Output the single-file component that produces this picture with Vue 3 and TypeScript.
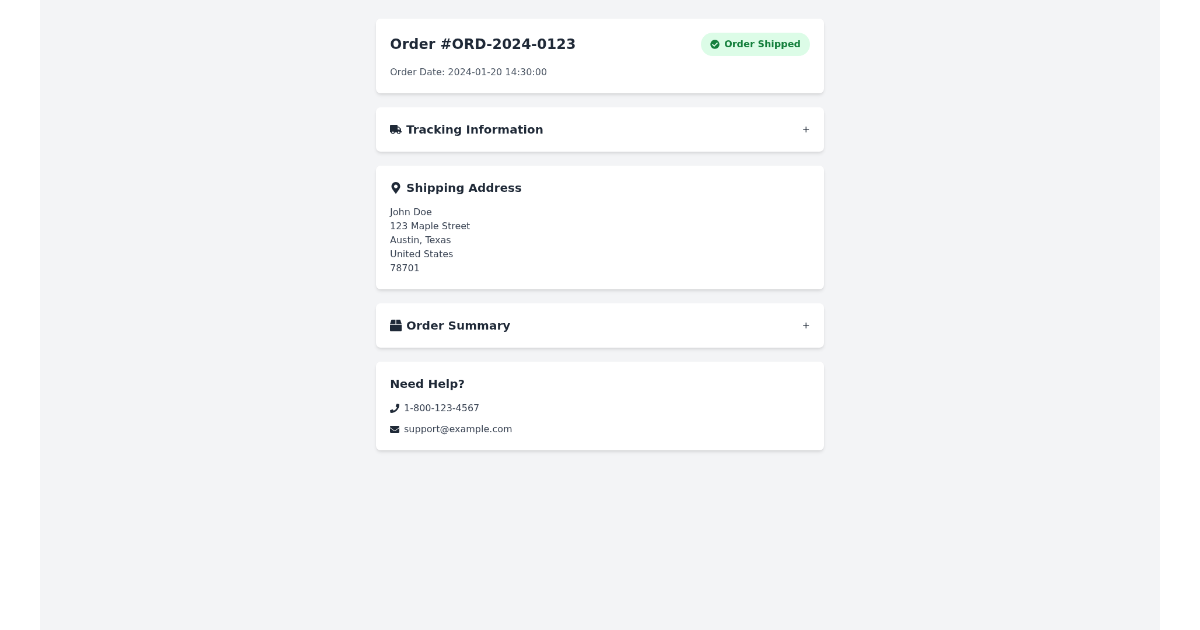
<script setup lang="ts">
const address = ['John Doe', '123 Maple Street', 'Austin, Texas', 'United States', '78701']
</script>

<template>
  <div class="frame">
    <div class="page">
      <div class="column">
        <section class="card">
          <div class="order-head">
            <h1 class="order-title">Order #ORD-2024-0123</h1>
            <span class="badge">
              <svg class="badge-icon" viewBox="0 0 512 512"><path d="M504 256c0 136.967-111.033 248-248 248S8 392.967 8 256 119.033 8 256 8s248 111.033 248 248zM227.314 387.314l184-184c6.248-6.248 6.248-16.379 0-22.627l-22.627-22.627c-6.248-6.249-16.379-6.249-22.628 0L216 308.118l-70.059-70.059c-6.248-6.248-16.379-6.248-22.628 0l-22.627 22.627c-6.248 6.248-6.248 16.379 0 22.627l104 104c6.249 6.249 16.379 6.249 22.628.001z" /></svg>Order Shipped
            </span>
          </div>
          <p class="order-date">Order Date: 2024-01-20 14:30:00</p>
        </section>

        <section class="card row">
          <h2 class="section-title">
            <svg class="title-icon" viewBox="0 0 640 512"><path d="M624 352h-16V243.9c0-12.7-5.1-24.9-14.1-33.9L494 110.1c-9-9-21.2-14.1-33.9-14.1H416V48c0-26.5-21.5-48-48-48H48C21.5 0 0 21.5 0 48v320c0 26.5 21.5 48 48 48h16c0 53 43 96 96 96s96-43 96-96h128c0 53 43 96 96 96s96-43 96-96h48c8.8 0 16-7.2 16-16v-32c0-8.8-7.2-16-16-16zM160 464c-26.5 0-48-21.5-48-48s21.5-48 48-48 48 21.5 48 48-21.5 48-48 48zm320 0c-26.5 0-48-21.5-48-48s21.5-48 48-48 48 21.5 48 48-21.5 48-48 48zm80-208H416V144h44.1l99.9 99.9V256z" /></svg>Tracking Information
          </h2>
          <span class="toggle">+</span>
        </section>

        <section class="card">
          <h2 class="section-title spaced">
            <svg class="title-icon" viewBox="0 0 384 512"><path d="M172.268 501.67C26.97 291.031 0 269.413 0 192 0 85.961 85.961 0 192 0s192 85.961 192 192c0 77.413-26.97 99.031-172.268 309.67-9.535 13.774-29.93 13.773-39.464 0zM192 272c44.183 0 80-35.817 80-80s-35.817-80-80-80-80 35.817-80 80 35.817 80 80 80z" /></svg>Shipping Address
          </h2>
          <div v-for="line in address" :key="line" class="small-line">{{ line }}</div>
        </section>

        <section class="card row">
          <h2 class="section-title">
            <svg class="title-icon" viewBox="0 0 512 512"><path d="M509.5 184.6L458.9 32.8C452.4 13.2 434.1 0 413.4 0H272v192h238.7c-.4-2.5-.4-5-1.2-7.4zM240 0H98.6c-20.7 0-39 13.2-45.5 32.8L2.5 184.6c-.8 2.4-.8 4.9-1.2 7.4H240V0zM0 224v240c0 26.5 21.5 48 48 48h416c26.5 0 48-21.5 48-48V224H0z" /></svg>Order Summary
          </h2>
          <span class="toggle">+</span>
        </section>

        <section class="card">
          <h2 class="section-title spaced">Need Help?</h2>
          <div class="contacts">
            <div class="small-line">
              <svg class="contact-icon" viewBox="0 0 512 512"><path d="M493.4 24.6l-104-24c-11.3-2.6-22.9 3.3-27.5 13.9l-48 112c-4.2 9.8-1.4 21.3 6.9 28l60.6 49.6c-36 76.7-98.9 140.5-177.2 177.2l-49.6-60.6c-6.8-8.3-18.2-11.1-28-6.9l-112 48C3.9 366.5-2 378.1.6 389.4l24 104C27.1 504.2 36.7 512 48 512c256.1 0 464-207.5 464-464 0-11.2-7.7-20.9-18.6-23.4z" /></svg>1-800-123-4567
            </div>
            <div class="small-line">
              <svg class="contact-icon" viewBox="0 0 512 512"><path d="M502.3 190.8c3.9-3.1 9.7-.2 9.7 4.7V400c0 26.5-21.5 48-48 48H48c-26.5 0-48-21.5-48-48V195.6c0-5 5.7-7.8 9.7-4.7 22.4 17.4 52.1 39.5 154.1 113.6 21.1 15.4 56.7 47.8 92.2 47.6 35.7.3 72-32.8 92.3-47.6 102-74.1 131.6-96.3 154-113.7zM256 320c23.2.4 56.6-29.2 73.4-41.4 132.7-96.3 142.8-104.7 173.4-128.7 5.8-4.5 9.2-11.5 9.2-18.9v-19c0-26.5-21.5-48-48-48H48C21.5 64 0 85.5 0 112v19c0 7.4 3.4 14.3 9.2 18.9 30.6 23.9 40.7 32.4 173.4 128.7 16.8 12.2 50.2 41.8 73.4 41.4z" /></svg>support@example.com
            </div>
          </div>
        </section>
      </div>
    </div>
  </div>
</template>

<style>
html,
body {
  margin: 0;
  background: #fff;
}
</style>

<style scoped>
.frame {
  width: 1120px;
  height: 630px;
  margin: 0 auto;
  overflow: hidden;
}
.page {
  box-sizing: border-box;
  width: 1920px;
  height: 1080px;
  padding-top: 32px;
  background: #f3f4f6;
  font-family: 'DejaVu Sans', sans-serif;
  transform: scale(0.583333);
  transform-origin: top left;
  will-change: transform;
}
.column {
  display: flex;
  flex-direction: column;
  gap: 24px;
  width: 768px;
  margin: 0 auto;
}
.card {
  padding: 24px;
  background: #fff;
  border-radius: 8px;
  box-shadow: 0 4px 6px -1px rgba(0, 0, 0, 0.1), 0 2px 4px -2px rgba(0, 0, 0, 0.1);
}
.row {
  display: flex;
  align-items: center;
  justify-content: space-between;
}
.order-head {
  display: flex;
  align-items: center;
  justify-content: space-between;
  margin-bottom: 16px;
}
.order-title {
  margin: 0;
  font-size: 24px;
  line-height: 32px;
  font-weight: 700;
  color: #1f2937;
}
.badge {
  padding: 8px 16px;
  border-radius: 9999px;
  background: #dcfce7;
  color: #15803d;
  font-size: 16px;
  line-height: 24px;
  font-weight: 700;
}
.badge-icon {
  width: 16px;
  height: 16px;
  margin-right: 8px;
  vertical-align: -2.5px;
  fill: currentColor;
}
.order-date {
  margin: 0;
  font-size: 16px;
  line-height: 24px;
  color: #4b5563;
}
.section-title {
  margin: 0;
  font-size: 20px;
  line-height: 28px;
  font-weight: 700;
  color: #1f2937;
}
.spaced {
  margin-bottom: 16px;
}
.title-icon {
  width: 20px;
  height: 20px;
  margin-right: 8px;
  vertical-align: -3px;
  fill: currentColor;
}
.toggle {
  font-size: 16px;
  line-height: 24px;
  color: #1f2937;
}
.small-line {
  font-size: 16px;
  line-height: 24px;
  color: #374151;
}
.contacts {
  display: flex;
  flex-direction: column;
  gap: 12px;
}
.contact-icon {
  width: 16px;
  height: 16px;
  margin-right: 8px;
  vertical-align: -3px;
  fill: #1f2937;
}
</style>
